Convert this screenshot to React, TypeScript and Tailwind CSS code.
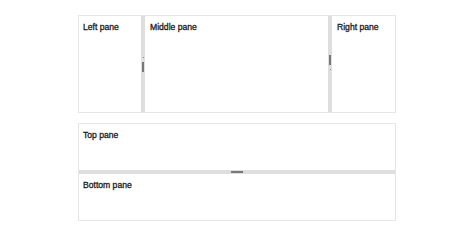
export default function App() {
  const label =
    "text-[8.6px] font-medium leading-[12px] text-[#1a1a1a] [-webkit-text-stroke:0.3px_#1a1a1a]";
  return (
    <div
      className="flex min-h-[240px] w-full justify-center bg-white pt-[15px]"
      style={{ fontFamily: '"Liberation Sans", Arial, sans-serif' }}
    >
      <div className="flex w-[318px] flex-col gap-[10px]">
        {/* horizontal split */}
        <div className="flex h-[98px] border border-[#e6e6e6]">
          <div className={`w-[62px] shrink-0 px-[4px] py-[5px] ${label}`}>Left pane</div>
          <div className="flex w-[4px] shrink-0 flex-col items-center justify-center gap-[4px] bg-[#dedede]">
            <span className="h-px w-px bg-[#888]" />
            <span className="h-[10px] w-[1.5px] bg-[#777]" />
          </div>
          <div className={`flex-1 px-[5px] py-[5px] ${label}`}>Middle pane</div>
          <div className="flex w-[4px] shrink-0 flex-col items-center justify-center gap-[4px] bg-[#dedede] pb-[4px]">
            <span className="h-[10px] w-[1.5px] bg-[#777]" />
            <span className="h-px w-px bg-[#888]" />
          </div>
          <div className={`w-[63px] shrink-0 px-[5px] py-[5px] ${label}`}>Right pane</div>
        </div>

        {/* vertical split */}
        <div className="flex h-[98px] flex-col border border-[#e6e6e6]">
          <div className={`flex-1 px-[4px] py-[5px] ${label}`}>Top pane</div>
          <div className="flex h-[4px] shrink-0 items-center justify-center bg-[#dedede]">
            <span className="h-[1.5px] w-[12px] bg-[#777]" />
          </div>
          <div className={`flex-1 px-[4px] py-[5px] ${label}`}>Bottom pane</div>
        </div>
      </div>
    </div>
  );
}
